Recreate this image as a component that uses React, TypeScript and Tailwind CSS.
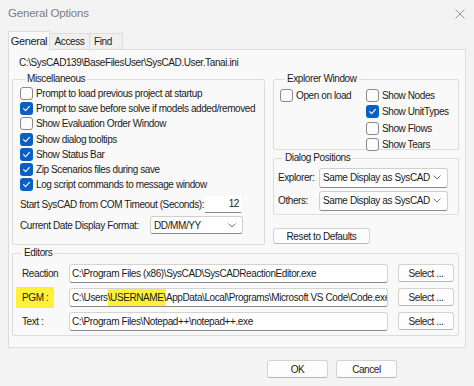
import React from "react";

const font = { fontFamily: '"Liberation Sans", Arial, sans-serif' };

function Check({ checked }: { checked?: boolean }) {
  return checked ? (
    <span className="flex h-[13px] w-[13px] shrink-0 items-center justify-center rounded-[3px] bg-[#0a5fc2]">
      <svg width="9" height="9" viewBox="0 0 10 10" fill="none">
        <path d="M1.8 5.2 L4 7.3 L8.3 2.7" stroke="white" strokeWidth="1.3" strokeLinecap="round" strokeLinejoin="round" />
      </svg>
    </span>
  ) : (
    <span className="h-[13px] w-[13px] shrink-0 rounded-[3px] border border-[#8a8a8a] bg-[#fbfbfb]" />
  );
}

function CheckRow({ label, checked }: { label: string; checked?: boolean }) {
  return (
    <div className="flex h-[15px] items-center gap-[3px] whitespace-nowrap">
      <Check checked={checked} />
      <span>{label}</span>
    </div>
  );
}

function Chevron() {
  return (
    <svg width="8" height="5" viewBox="0 0 8 5" fill="none">
      <path d="M0.5 0.5 L4 4 L7.5 0.5" stroke="#6a6a6a" strokeWidth="0.9" />
    </svg>
  );
}

function Dropdown({ value, className }: { value: string; className: string }) {
  return (
    <div className={`flex items-center justify-between whitespace-nowrap rounded-[3px] border border-[#cfcfcf] border-b-[#8a8a8a] bg-white pl-[3px] pr-[6px] ${className}`}>
      <span>{value}</span>
      <Chevron />
    </div>
  );
}

function Btn({ label, className }: { label: string; className: string }) {
  return (
    <div className={`flex items-center justify-center whitespace-nowrap rounded-[3px] border border-[#d3d3d3] border-b-[#b8b8b8] bg-[#fdfdfd] ${className}`}>
      {label}
    </div>
  );
}

function Group({ title, className, children }: { title: string; className: string; children: React.ReactNode }) {
  return (
    <fieldset className={`rounded-[2px] border border-[#dcdcdc] ${className}`}>
      <legend className="ml-[5px] px-[2px] leading-[12px]">{title}</legend>
      {children}
    </fieldset>
  );
}

function EditorRow({ label, hl, children }: { label: React.ReactNode; hl?: boolean; children: React.ReactNode }) {
  return (
    <div className="flex h-[24px] items-center whitespace-nowrap">
      <div className="w-[52px] pl-[5px]">
        {hl ? <span className="-ml-[6px] bg-[#fff03a] px-[6px] py-[5px]">{label}</span> : label}
      </div>
      <div className="flex h-[19px] w-[319px] items-center overflow-hidden rounded-[3px] border border-[#d3d3d3] border-b-[#8a8a8a] bg-white pl-[2px]">
        {children}
      </div>
      <Btn label="Select ..." className="ml-[10px] h-[18px] w-[56px]" />
    </div>
  );
}

export default function App() {
  return (
    <div style={font} className="relative h-[386px] w-[474px] overflow-hidden bg-[#f3f3f3] text-[10px] tracking-[-0.4px] text-[#1b1b1b]">
      {/* title bar */}
      <div className="flex h-[28px] items-center justify-between pl-[8px] pr-[9px]">
        <span className="text-[11.5px] tracking-[-0.2px] text-[#7d7d7d]">General Options</span>
        <svg width="10" height="10" viewBox="0 0 10 10">
          <path d="M0.5 0.5 L9.5 9.5 M9.5 0.5 L0.5 9.5" stroke="#8a8a8a" strokeWidth="0.9" />
        </svg>
      </div>

      {/* tabs */}
      <div className="ml-[8px] mt-[3px] flex items-end">
        <div className="relative z-10 -mb-px flex h-[19px] w-[42px] items-center justify-center border border-b-0 border-[#dcdcdc] bg-[#f9f9f9] text-[11px]">
          General
        </div>
        <div className="flex h-[16px] w-[40px] items-center justify-center border-t border-r border-[#dcdcdc] bg-[#f0f0f0]">Access</div>
        <div className="flex h-[16px] w-[33px] items-center border-t border-r border-[#dcdcdc] bg-[#f0f0f0] pl-[4px]">Find</div>
      </div>

      {/* tab page */}
      <div className="mx-[8px] h-[299px] border border-[#dcdcdc] bg-[#f9f9f9] pl-[3px] pr-[6px]">
        <div className="flex h-[23px] items-center whitespace-nowrap pl-[7px] pt-[2px]">C:\SysCAD139\BaseFilesUser\SysCAD.User.Tanai.ini</div>

        <div className="flex gap-[8px]">
          {/* Miscellaneous */}
          <Group title="Miscellaneous" className="h-[172px] w-[253px] pl-[7px]">
            <div className="mt-[1px] flex flex-col gap-[0.2px]">
              <CheckRow label="Prompt to load previous project at startup" />
              <CheckRow label="Prompt to save before solve if models added/removed" checked />
              <CheckRow label="Show Evaluation Order Window" />
              <CheckRow label="Show dialog tooltips" checked />
              <CheckRow label="Show Status Bar" checked />
              <CheckRow label="Zip Scenarios files during save" checked />
              <CheckRow label="Log script commands to message window" checked />
            </div>
            <div className="mt-[3px] flex h-[18px] items-center whitespace-nowrap">
              <span className="w-[185px]">Start SysCAD from COM Timeout (Seconds):</span>
              <div className="flex h-[17px] w-[36px] items-center justify-end border-b border-[#8a8a8a] bg-white pr-[2px]">12</div>
            </div>
            <div className="mt-[2px] flex h-[20px] items-center whitespace-nowrap">
              <span className="w-[130px]">Current Date Display Format:</span>
              <Dropdown value="DD/MM/YY" className="h-[18px] w-[93px]" />
            </div>
          </Group>

          {/* right column */}
          <div className="flex w-[186px] flex-col">
            <Group title="Explorer Window" className="h-[77px] pl-[6px]">
              <div className="flex">
                <div className="mt-[3px] w-[86px]">
                  <CheckRow label="Open on load" />
                </div>
                <div className="mt-[3px] flex flex-col gap-[1.4px]">
                  <CheckRow label="Show Nodes" />
                  <CheckRow label="Show UnitTypes" checked />
                  <CheckRow label="Show Flows" />
                  <CheckRow label="Show Tears" />
                </div>
              </div>
            </Group>
            <Group title="Dialog Positions" className="mt-[2px] h-[63px] pl-[4px]">
              <div className="mt-[3px] flex h-[21px] items-center whitespace-nowrap">
                <span className="w-[41px]">Explorer:</span>
                <Dropdown value="Same Display as SysCAD" className="h-[20px] w-[129px]" />
              </div>
              <div className="mt-[2px] flex h-[21px] items-center whitespace-nowrap">
                <span className="w-[41px]">Others:</span>
                <Dropdown value="Same Display as SysCAD" className="h-[20px] w-[129px]" />
              </div>
            </Group>
            <Btn label="Reset to Defaults" className="mt-[13px] h-[16px] w-[97px]" />
          </div>
        </div>

        {/* Editors */}
        <Group title="Editors" className="mt-[2px] h-[89px] w-[447px] pl-[4px]">
          <div className="mt-[2px] flex flex-col">
            <EditorRow label="Reaction">C:\Program Files (x86)\SysCAD\SysCADReactionEditor.exe</EditorRow>
            <EditorRow label="PGM :" hl>
              C:\Users<span className="bg-[#fff03a] py-[4px]">\USERNAME\</span>AppData\Local\Programs\Microsoft VS Code\Code.exe
            </EditorRow>
            <EditorRow label="Text :">C:\Program Files\Notepad++\notepad++.exe</EditorRow>
          </div>
        </Group>
      </div>

      {/* footer */}
      <div className="mt-[12px] flex gap-[8px] pl-[267px]">
        <Btn label="OK" className="h-[18px] w-[61px]" />
        <Btn label="Cancel" className="h-[18px] w-[61px]" />
      </div>
    </div>
  );
}
